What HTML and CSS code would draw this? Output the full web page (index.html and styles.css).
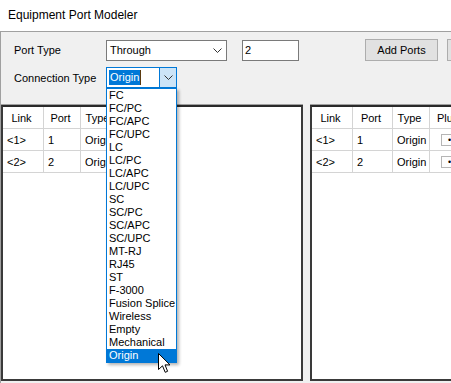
FILE: index.html
```html
<!DOCTYPE html>
<html>
<head>
<meta charset="utf-8">
<link rel="stylesheet" href="styles.css">
</head>
<body>
<div class="window">
  <div class="titlebar">Equipment Port Modeler</div>
  <div class="client">
    <div class="form">
      <div class="row row1">
        <span class="label">Port Type</span>
        <div class="combo combo-port">
          <span class="combo-text">Through</span>
          <span class="chev"><svg width="9" height="5" viewBox="0 0 9 5"><path d="M0.5 0.5 L4.5 4.5 L8.5 0.5" fill="none" stroke="#333" stroke-width="1"/></svg></span>
        </div>
        <div class="textbox">2</div>
        <button class="btn btn-add">Add Ports</button>
        <button class="btn btn-next"></button>
      </div>
      <div class="row row2">
        <span class="label">Connection Type</span>
        <div class="combo combo-open">
          <span class="combo-text"><span class="sel">Origin</span><span class="caret"></span></span>
          <span class="chev chev-open"><svg width="9" height="5" viewBox="0 0 9 5"><path d="M0.5 0.5 L4.5 4.5 L8.5 0.5" fill="none" stroke="#333" stroke-width="1"/></svg></span>
        </div>
      </div>
    </div>
    <div class="grids">
      <div class="panel panel-left">
        <div class="grow head">
          <div class="cell c-link">Link</div>
          <div class="cell c-port-l">Port</div>
          <div class="cell c-type">Type</div>
          <div class="cell c-plug"></div>
        </div>
        <div class="grow">
          <div class="cell c-link">&lt;1&gt;</div>
          <div class="cell c-port-l">1</div>
          <div class="cell c-type">Origin</div>
          <div class="cell c-plug"></div>
        </div>
        <div class="grow">
          <div class="cell c-link">&lt;2&gt;</div>
          <div class="cell c-port-l">2</div>
          <div class="cell c-type">Origin</div>
          <div class="cell c-plug"></div>
        </div>
      </div>
      <div class="panel panel-right">
        <div class="grow head">
          <div class="cell c-link">Link</div>
          <div class="cell c-port">Port</div>
          <div class="cell c-type">Type</div>
          <div class="cell c-plug c-plug-head">Plu</div>
        </div>
        <div class="grow">
          <div class="cell c-link">&lt;1&gt;</div>
          <div class="cell c-port">1</div>
          <div class="cell c-type">Origin</div>
          <div class="cell c-plug"><span class="dotbtn">•</span></div>
        </div>
        <div class="grow">
          <div class="cell c-link">&lt;2&gt;</div>
          <div class="cell c-port">2</div>
          <div class="cell c-type">Origin</div>
          <div class="cell c-plug"><span class="dotbtn">•</span></div>
        </div>
      </div>
    </div>
    <ul class="dropdown">
      <li>FC</li>
      <li>FC/PC</li>
      <li>FC/APC</li>
      <li>FC/UPC</li>
      <li>LC</li>
      <li>LC/PC</li>
      <li>LC/APC</li>
      <li>LC/UPC</li>
      <li>SC</li>
      <li>SC/PC</li>
      <li>SC/APC</li>
      <li>SC/UPC</li>
      <li>MT-RJ</li>
      <li>RJ45</li>
      <li>ST</li>
      <li>F-3000</li>
      <li>Fusion Splice</li>
      <li>Wireless</li>
      <li>Empty</li>
      <li>Mechanical</li>
      <li class="active">Origin</li>
    </ul>
    <svg class="cursor" width="13" height="21" viewBox="0 0 13 21"><path d="M0.5 0.5 L0.5 16.5 L4.5 12.8 L7.2 19.3 L9.6 18.3 L7 11.9 L12 11.9 Z" fill="#fff" stroke="#000" stroke-width="1" stroke-linejoin="miter"/></svg>
  </div>
</div>
</body>
</html>
```
FILE: styles.css
```css
html, body {
  margin: 0;
  padding: 0;
}
body {
  width: 451px;
  height: 383px;
  overflow: hidden;
  background: #ffffff;
  font-family: "Liberation Sans", Arial, sans-serif;
  font-size: 11px;
  color: #000;
}
.window {
  width: 451px;
  height: 383px;
  display: flex;
  flex-direction: column;
}
.titlebar {
  height: 31px;
  line-height: 31px;
  padding-left: 8px;
  font-size: 12px;
  color: #000;
  background: #fff;
  flex-shrink: 0;
}
.client {
  position: relative;
  flex: 1;
  background: #f0f0f0;
  border-top: 1px solid #a0a0a0;
  border-left: 1px solid #a0a0a0;
  overflow: hidden;
}
.form {
  padding: 7px 0 0 13px;
}
.row {
  display: flex;
  align-items: center;
  white-space: nowrap;
}
.row1 {
  height: 22px;
}
.row2 {
  height: 21px;
  margin-top: 6px;
}
.label {
  width: 92px;
  flex-shrink: 0;
}
.combo {
  box-sizing: border-box;
  height: 21px;
  background: #fff;
  border: 1px solid #7a7a7a;
  display: flex;
  align-items: stretch;
  flex-shrink: 0;
}
.combo-port {
  width: 121px;
}
.combo-text {
  flex: 1;
  display: flex;
  align-items: center;
  padding-left: 3px;
}
.chev {
  width: 17px;
  display: flex;
  align-items: center;
  justify-content: center;
}
.combo-open {
  width: 71px;
  border-color: #0078d7;
}
.combo-open .combo-text {
  padding-left: 2px;
}
.sel {
  background: #0078d7;
  color: #fff;
  line-height: 15px;
  padding: 0 1px;
}
.caret {
  width: 1px;
  height: 15px;
  background: #5a3a10;
}
.chev-open {
  width: 16px;
  background: #cce4f7;
  border-left: 1px solid #0078d7;
}
.textbox {
  box-sizing: border-box;
  width: 57px;
  height: 21px;
  margin-left: 15px;
  background: #fff;
  border: 1px solid #7a7a7a;
  padding-left: 2px;
  line-height: 19px;
  flex-shrink: 0;
}
.btn {
  box-sizing: border-box;
  height: 22px;
  width: 73px;
  background: #e1e1e1;
  border: 1px solid #adadad;
  font-family: "Liberation Sans", Arial, sans-serif;
  font-size: 11px;
  color: #000;
  padding: 0;
  flex-shrink: 0;
}
.btn-add {
  margin-left: 66px;
}
.btn-next {
  margin-left: 9px;
}
.grids {
  display: flex;
  gap: 7px;
  margin-top: 17px;
}
.panel {
  box-sizing: border-box;
  height: 276px;
  background: #fff;
  border: 2px solid #3a3a3a;
  border-top-color: #2a2a2a;
  box-shadow: 0 -1px 0 #a0a0a0;
  overflow: hidden;
  flex-shrink: 0;
}
.panel-left {
  width: 302px;
}
.panel-right {
  width: 200px;
}
.grow {
  display: flex;
  height: 22px;
  box-sizing: border-box;
  border-bottom: 1px solid #d4d4d4;
  white-space: nowrap;
  width: max-content;
}
.cell {
  box-sizing: border-box;
  height: 100%;
  border-right: 1px solid #d4d4d4;
  padding-left: 4px;
  display: flex;
  align-items: center;
  overflow: hidden;
  flex-shrink: 0;
}
.head .cell {
  justify-content: center;
  padding-left: 0;
  padding-right: 3px;
}
.c-link { width: 41px; }
.c-port { width: 40px; }
.c-port-l { width: 37px; }
.c-type { width: 37px; }
.c-plug { width: 40px; padding-left: 0; justify-content: center; }
.head .c-plug-head {
  justify-content: flex-start;
  padding-left: 7px;
  padding-right: 0;
}
.dotbtn {
  box-sizing: border-box;
  width: 18px;
  height: 12px;
  border: 1px solid #b5b5b5;
  background: #fdfdfd;
  display: flex;
  align-items: center;
  justify-content: center;
  font-size: 9px;
  line-height: 10px;
}
.dropdown {
  position: absolute;
  left: 105px;
  top: 56px;
  width: 71px;
  box-sizing: border-box;
  margin: 0;
  padding: 0;
  list-style: none;
  background: #fff;
  border: 1px solid #0078d7;
  box-shadow: 2px 2px 3px rgba(0, 0, 0, 0.3);
}
.dropdown li {
  height: 13px;
  line-height: 13px;
  padding-left: 2px;
  white-space: nowrap;
}
.dropdown li.active {
  background: #0078d7;
  color: #fff;
}
.cursor {
  position: absolute;
  left: 157px;
  top: 321px;
}
```
